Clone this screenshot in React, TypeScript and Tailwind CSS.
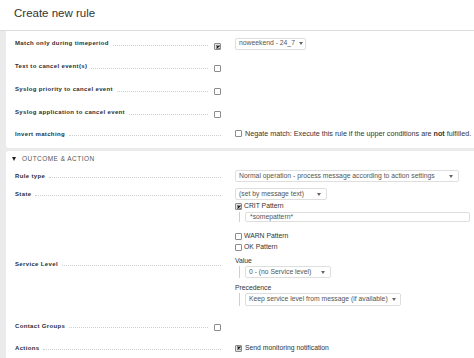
import React from 'react';

const font = { fontFamily: '"Liberation Sans", Arial, sans-serif' };

const Check: React.FC<{ checked?: boolean }> = ({ checked }) => (
  <span
    className={`inline-flex h-[7px] w-[7px] shrink-0 items-center justify-center rounded-[1px] border border-[#8c8c8c] ${
      checked ? 'bg-[#e4e4e4]' : 'bg-white'
    }`}
  >
    {checked && (
      <svg viewBox="0 0 5 5" className="h-[4px] w-[4px]">
        <path d="M0.6 0.6L4.4 4.4M4.4 0.6L0.6 4.4" stroke="#1a1a1a" strokeWidth="1.4" />
      </svg>
    )}
  </span>
);

const Caret = () => (
  <span className="ml-auto h-0 w-0 shrink-0 border-x-[2px] border-t-[3px] border-x-transparent border-t-[#666]" />
);

const Select: React.FC<{ text: string; className: string }> = ({ text, className }) => (
  <div
    className={`flex h-[12px] items-center rounded-[2px] border border-[#dedede] bg-white pl-[3px] pr-[5px] text-[6.8px] text-[#555] ${className}`}
  >
    <span className="whitespace-nowrap pr-[4px]">{text}</span>
    <Caret />
  </div>
);

const Label: React.FC<{ text: string; check?: boolean; box?: boolean; className?: string }> = ({
  text,
  check,
  box,
  className = 'h-[23px]',
}) => (
  <div className={`flex w-[229px] shrink-0 items-center pl-[9px] pr-[14px] ${className}`}>
    <span className="whitespace-nowrap text-[6px] font-bold tracking-[0.35px] text-[#2a2f36]">{text}</span>
    <span className="ml-[4px] mt-[3px] h-0 flex-1 border-b border-dotted border-[#cfcfcf]" />
    {box && (
      <span className="ml-[6px]">
        <Check checked={check} />
      </span>
    )}
  </div>
);

const CheckLine: React.FC<{ text: string; checked?: boolean; className?: string }> = ({
  text,
  checked,
  className = '',
}) => (
  <div className={`flex h-[9px] items-center gap-[2px] text-[6.8px] text-[#333] ${className}`}>
    <Check checked={checked} />
    <span className="whitespace-nowrap">{text}</span>
  </div>
);

const Indented: React.FC<{ children: React.ReactNode; className?: string }> = ({ children, className = '' }) => (
  <div className={`flex gap-[5px] ${className}`}>
    <span className="ml-[4px] w-px self-stretch bg-[#cfcfcf]" />
    {children}
  </div>
);

export default function App() {
  return (
    <div className="min-h-screen w-[474px] overflow-hidden bg-[#ebebeb]" style={font}>
      <div className="flex h-[31px] items-center border-b border-[#dcdcdc] bg-white pb-[3px] pl-[14px]">
        <h1 className="text-[11.5px] text-[#333]">Create new rule</h1>
      </div>

      <div className="ml-[6px] rounded-bl-[3px] bg-white pb-[4px] pt-[1px]">
        <div className="flex items-center">
          <Label text="Match only during timeperiod" box check />
          <Select text="noweekend - 24_7" className="w-[71px]" />
        </div>
        <Label text="Text to cancel event(s)" box />
        <Label text="Syslog priority to cancel event" box />
        <Label text="Syslog application to cancel event" box />
        <div className="flex h-[20px] items-center">
          <Label text="Invert matching" className="h-[20px]" />
          <div className="flex items-center gap-[3px] text-[7.2px] text-[#333]">
            <Check />
            <span className="whitespace-nowrap">
              Negate match: Execute this rule if the upper conditions are <b>not</b> fulfilled.
            </span>
          </div>
        </div>
      </div>

      <div className="ml-[6px] mt-[3px] min-h-[220px] rounded-tl-[3px] bg-white">
        <div className="flex h-[16px] items-center gap-[6px] pl-[6px] text-[6.5px] uppercase tracking-[0.45px] text-[#555]">
          <span className="h-0 w-0 border-x-[2.5px] border-t-[4px] border-x-transparent border-t-[#222]" />
          <span>Outcome &amp; Action</span>
        </div>

        <div className="flex h-[18px] items-center">
          <Label text="Rule type" className="h-[18px]" />
          <Select
            text="Normal operation - process message according to action settings"
            className="w-[224px]"
          />
        </div>

        <div className="flex items-start">
          <Label text="State" className="mt-[3px] h-[12px]" />
          <div className="flex flex-col pt-[3px]">
            <Select text="(set by message text)" className="w-[92px]" />
            <CheckLine text="CRIT Pattern" checked className="mt-[2px]" />
            <Indented className="mt-[1px] h-[10px]">
              <div className="flex w-[225px] items-center rounded-[2px] border border-[#dedede] bg-white pl-[4px] text-[6.8px] text-[#555]">
                *somepattern*
              </div>
            </Indented>
            <CheckLine text="WARN Pattern" className="mt-[10px]" />
            <CheckLine text="OK Pattern" className="mt-[2px]" />
          </div>
        </div>

        <div className="flex items-start">
          <Label text="Service Level" className="mt-[6px] h-[12px]" />
          <div className="flex flex-col pt-[5px] text-[6.8px] text-[#333]">
            <div className="flex h-[9px] items-center">Value</div>
            <Indented className="mt-0 h-[12px]">
              <Select text="0 - (no Service level)" className="w-[86px]" />
            </Indented>
            <div className="mt-[6px] flex h-[9px] items-center">Precedence</div>
            <Indented className="h-[13px]">
              <Select text="Keep service level from message (if available)" className="h-[13px] w-[156px]" />
            </Indented>
          </div>
        </div>

        <Label text="Contact Groups" box className="mt-[10px] h-[20px]" />
        <div className="mt-[2px] flex h-[20px] items-center">
          <Label text="Actions" className="h-[20px]" />
          <CheckLine text="Send monitoring notification" checked className="gap-[3px]" />
        </div>
      </div>
    </div>
  );
}
